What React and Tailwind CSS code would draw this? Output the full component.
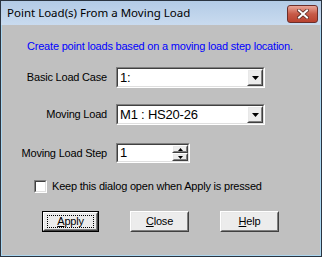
import { useState } from 'react'

const Sunken = ({ className = '', children }) => (
   <div className={`border border-t-[#808080] border-l-[#808080] border-r-white border-b-white ${className}`}>
      <div className="h-full border border-t-[#404040] border-l-[#404040] border-r-[#dfdfdf] border-b-[#dfdfdf] bg-white">{children}</div>
   </div>
)

const Raised = ({ className = '', children }) => (
   <div className={`border border-t-white border-l-white border-r-[#404040] border-b-[#404040] ${className}`}>
      <div className="h-full flex items-center justify-center border border-t-[#e8e8e8] border-l-[#e8e8e8] border-r-[#808080] border-b-[#808080] bg-[#ececec]">{children}</div>
   </div>
)

const DownArrow = () => (
   <svg width="7" height="4" viewBox="0 0 7 4">
      <path d="M0 0h7L3.5 4z" fill="#000" />
   </svg>
)

const ComboBox = ({ value }) => (
   <Sunken className="w-[149px] h-[21px]">
      <div className="flex h-full items-center">
         <span className="flex-1 pl-[2px] text-[13px] leading-none text-black">{value}</span>
         <Raised className="w-[16px] h-[17px]">
            <DownArrow />
         </Raised>
      </div>
   </Sunken>
)

const FormRow = ({ label, children }) => (
   <div className="flex items-center">
      <span className="w-[106px] pr-[1px] text-right">{label}</span>
      <div className="ml-[8px]">{children}</div>
   </div>
)

const DialogButton = ({ children, isDefault }) =>
   isDefault ? (
      <div className="w-[57px] h-[21px] border border-black">
         <Raised className="h-full">
            <span className="w-[47px] h-[13px] flex items-center justify-center border border-dotted border-black">{children}</span>
         </Raised>
      </div>
   ) : (
      <Raised className="w-[59px] h-[21px]">{children}</Raised>
   )

export default function App() {
   const [keepOpen, setKeepOpen] = useState(false)

   return (
      <div className="w-[322px] h-[257px] border border-[#2a3440] bg-[#aad6f0] p-[1px] overflow-hidden" style={{ fontFamily: '"Liberation Sans", Arial, sans-serif' }}>
         <div className="flex flex-col h-full">
            {/* title bar */}
            <div className="h-[24px] -mx-[1px] -mt-[1px] flex items-center justify-between bg-gradient-to-b from-[#b3cbe6] to-[#c9dbef] pl-[6px] pr-[3px]">
               <span className="text-[11.5px] text-black" style={{ fontFamily: '"Noto Sans", "Open Sans", sans-serif' }}>Point Load(s) From a Moving Load</span>
               <div className="w-[31px] h-[18px] mt-[1px] rounded-[3px] border border-[#6b2e2a] bg-gradient-to-b from-[#e8a598] via-[#c75a47] to-[#b9422f] flex items-center justify-center">
                  <svg width="12" height="10" viewBox="0 0 12 10">
                     <path d="M2 1.5l8 7M10 1.5l-8 7" stroke="#5a2a24" strokeWidth="3.6" strokeLinecap="square" />
                     <path d="M2 1.5l8 7M10 1.5l-8 7" stroke="#fff" strokeWidth="2" strokeLinecap="square" />
                  </svg>
               </div>
            </div>

            {/* client area */}
            <div className="flex-1 bg-[#c0c0c0] text-[11px] text-black leading-[13px] tracking-[-0.2px]">
               <p className="mt-[15px] pl-[25px] text-[#0000ff]">Create point loads based on a moving load step location.</p>

               <div className="mt-[14px]">
                  <FormRow label="Basic Load Case">
                     <ComboBox value="1:" />
                  </FormRow>
               </div>

               <div className="mt-[16px]">
                  <FormRow label="Moving Load">
                     <ComboBox value="M1 : HS20-26" />
                  </FormRow>
               </div>

               <div className="mt-[18px]">
                  <FormRow label="Moving Load Step">
                     <Sunken className="w-[74px] h-[20px]">
                        <div className="flex h-full">
                           <span className="flex-1 pl-[2px] text-[13px] leading-[16px]">1</span>
                           <div className="flex flex-col w-[16px]">
                              <Raised className="h-[8px]">
                                 <svg width="5" height="3" viewBox="0 0 5 3"><path d="M2.5 0L5 3H0z" fill="#000" /></svg>
                              </Raised>
                              <Raised className="h-[8px]">
                                 <svg width="5" height="3" viewBox="0 0 5 3"><path d="M0 0h5L2.5 3z" fill="#000" /></svg>
                              </Raised>
                           </div>
                        </div>
                     </Sunken>
                  </FormRow>
               </div>

               <label className="mt-[17px] ml-[32px] flex items-center gap-[5px]" onClick={() => setKeepOpen(!keepOpen)}>
                  <Sunken className="w-[13px] h-[13px]" />
                  <span>Keep this dialog open when Apply is pressed</span>
               </label>

               <div className="mt-[18px] flex pl-[40px] gap-[31px]">
                  <DialogButton isDefault>
                     <span className="underline">A</span>pply
                  </DialogButton>
                  <DialogButton>
                     <span className="underline">C</span>lose
                  </DialogButton>
                  <DialogButton>
                     <span className="underline">H</span>elp
                  </DialogButton>
               </div>
            </div>
         </div>
      </div>
   )
}
